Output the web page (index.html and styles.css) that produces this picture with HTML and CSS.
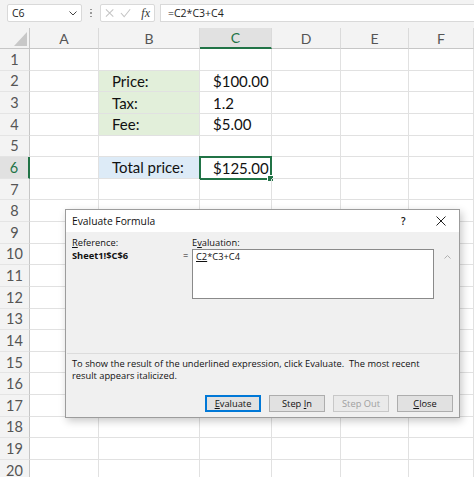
FILE: index.html
```html
<!DOCTYPE html>
<html>
<head>
<meta charset="utf-8">
<link rel="stylesheet" href="styles.css">
</head>
<body>
<div class="app">
  <div class="toolbar">
    <div class="namebox">
      <span class="nb-text">C6</span>
      <svg class="chev" width="8" height="5" viewBox="0 0 8 5"><path d="M0.5 0.5 L4 4 L7.5 0.5" fill="none" stroke="#444" stroke-width="1"/></svg>
    </div>
    <div class="vdots"><span></span><span></span><span></span></div>
    <div class="fxbox">
      <svg width="10" height="10" viewBox="0 0 10 10"><path d="M1 1 L9 9 M9 1 L1 9" stroke="#c4c4c4" stroke-width="1.1"/></svg>
      <svg width="12" height="10" viewBox="0 0 12 10"><path d="M1 5 L4.5 9 L11 1" fill="none" stroke="#c4c4c4" stroke-width="1.1"/></svg>
      <span class="fx">fx</span>
    </div>
    <div class="formula">=C2*C3+C4</div>
  </div>

  <div class="sheet">
    <div class="hd corner"><svg width="13" height="14" viewBox="0 0 13 14"><polygon points="13,0 13,14 0,14" fill="#c8c8c8"/></svg></div>
    <div class="hd col">A</div>
    <div class="hd col">B</div>
    <div class="hd col sel">C</div>
    <div class="hd col">D</div>
    <div class="hd col">E</div>
    <div class="hd col">F</div>

    <div class="hd rown">1</div><div class="c"></div><div class="c"></div><div class="c"></div><div class="c"></div><div class="c"></div><div class="c"></div>
    <div class="hd rown">2</div><div class="c"></div><div class="c green">Price:</div><div class="c">$100.00</div><div class="c"></div><div class="c"></div><div class="c"></div>
    <div class="hd rown">3</div><div class="c"></div><div class="c green">Tax:</div><div class="c">1.2</div><div class="c"></div><div class="c"></div><div class="c"></div>
    <div class="hd rown">4</div><div class="c"></div><div class="c green">Fee:</div><div class="c">$5.00</div><div class="c"></div><div class="c"></div><div class="c"></div>
    <div class="hd rown">5</div><div class="c"></div><div class="c"></div><div class="c"></div><div class="c"></div><div class="c"></div><div class="c"></div>
    <div class="hd rown rsel">6</div><div class="c"></div><div class="c blue">Total price:</div><div class="c active">$125.00<span class="handle"></span></div><div class="c"></div><div class="c"></div><div class="c"></div>
    <div class="hd rown">7</div><div class="c"></div><div class="c"></div><div class="c"></div><div class="c"></div><div class="c"></div><div class="c"></div>
    <div class="hd rown">8</div><div class="c"></div><div class="c"></div><div class="c"></div><div class="c"></div><div class="c"></div><div class="c"></div>
    <div class="hd rown">9</div><div class="c"></div><div class="c"></div><div class="c"></div><div class="c"></div><div class="c"></div><div class="c"></div>
    <div class="hd rown">10</div><div class="c"></div><div class="c"></div><div class="c"></div><div class="c"></div><div class="c"></div><div class="c"></div>
    <div class="hd rown">11</div><div class="c"></div><div class="c"></div><div class="c"></div><div class="c"></div><div class="c"></div><div class="c"></div>
    <div class="hd rown">12</div><div class="c"></div><div class="c"></div><div class="c"></div><div class="c"></div><div class="c"></div><div class="c"></div>
    <div class="hd rown">13</div><div class="c"></div><div class="c"></div><div class="c"></div><div class="c"></div><div class="c"></div><div class="c"></div>
    <div class="hd rown">14</div><div class="c"></div><div class="c"></div><div class="c"></div><div class="c"></div><div class="c"></div><div class="c"></div>
    <div class="hd rown">15</div><div class="c"></div><div class="c"></div><div class="c"></div><div class="c"></div><div class="c"></div><div class="c"></div>
    <div class="hd rown">16</div><div class="c"></div><div class="c"></div><div class="c"></div><div class="c"></div><div class="c"></div><div class="c"></div>
    <div class="hd rown">17</div><div class="c"></div><div class="c"></div><div class="c"></div><div class="c"></div><div class="c"></div><div class="c"></div>
    <div class="hd rown">18</div><div class="c"></div><div class="c"></div><div class="c"></div><div class="c"></div><div class="c"></div><div class="c"></div>
    <div class="hd rown">19</div><div class="c"></div><div class="c"></div><div class="c"></div><div class="c"></div><div class="c"></div><div class="c"></div>
    <div class="hd rown">20</div><div class="c"></div><div class="c"></div><div class="c"></div><div class="c"></div><div class="c"></div><div class="c"></div>
  </div>

  <div class="dialog">
    <div class="dlg-title">
      <span class="dlg-name">Evaluate Formula</span>
      <span class="dlg-help">?</span>
      <svg class="dlg-close" width="10" height="10" viewBox="0 0 10 10"><path d="M0.5 0.5 L9.5 9.5 M9.5 0.5 L0.5 9.5" stroke="#222" stroke-width="1"/></svg>
    </div>
    <div class="dlg-body">
      <div class="eval-grid">
        <div class="lbl"><u>R</u>eference:</div>
        <div></div>
        <div class="lbl">E<u>v</u>aluation:</div>
        <div></div>
        <div class="ref">Sheet1!$C$6</div>
        <div class="eq">=</div>
        <div class="evalbox"><u>C2</u>*C3+C4</div>
        <div class="scroll"><svg width="7" height="4" viewBox="0 0 7 4"><path d="M0.5 3.5 L3.5 0.5 L6.5 3.5" fill="none" stroke="#b0b0b0" stroke-width="1"/></svg></div>
      </div>
      <div class="sep"></div>
      <p class="hint">To show the result of the underlined expression, click Evaluate.&nbsp; The most recent<br>result appears italicized.</p>
      <div class="buttons">
        <button class="btn default"><u>E</u>valuate</button>
        <button class="btn">Step <u>I</u>n</button>
        <button class="btn disabled">Step Out</button>
        <button class="btn"><u>C</u>lose</button>
      </div>
    </div>
  </div>
</div>
</body>
</html>
```
FILE: styles.css
```css
html, body {
  margin: 0;
  padding: 0;
  background: #ffffff;
}
.app {
  position: relative;
  width: 474px;
  height: 477px;
  overflow: hidden;
  font-family: "Open Sans", "Noto Sans", sans-serif;
}
.toolbar {
  height: 28px;
  background: #f3f3f3;
  display: flex;
  align-items: flex-start;
  padding: 4px 0 0 7px;
  box-sizing: border-box;
}
.namebox {
  width: 75px;
  height: 18px;
  box-sizing: border-box;
  background: #fff;
  border: 1px solid #d9d9d9;
  border-radius: 2px;
  display: flex;
  align-items: center;
  justify-content: space-between;
  padding: 0 4px 0 4px;
  font-size: 10.5px;
  color: #222;
}
.chev { margin-top: 1px; }
.vdots {
  width: 18px;
  height: 18px;
  display: flex;
  flex-direction: column;
  align-items: center;
  justify-content: center;
  gap: 2px;
}
.vdots span {
  width: 1.5px;
  height: 1.5px;
  background: #8a8a8a;
  border-radius: 50%;
}
.fxbox {
  width: 55px;
  height: 18px;
  box-sizing: border-box;
  background: #fff;
  border: 1px solid #d9d9d9;
  border-radius: 2px;
  display: flex;
  align-items: center;
  padding: 0 4px 0 4px;
  gap: 6px;
}
.fx {
  font-family: "Liberation Serif", "DejaVu Serif", serif;
  font-style: italic;
  font-size: 12px;
  color: #333;
  margin-left: 4px;
}
.formula {
  flex: 1;
  height: 18px;
  margin-left: 5px;
  box-sizing: border-box;
  background: #fff;
  border: 1px solid #d9d9d9;
  border-right: none;
  padding-left: 7px;
  font-size: 10.5px;
  line-height: 16px;
  color: #222;
}

.sheet {
  display: grid;
  grid-template-columns: 30px 69px 101px 72px 69px 68px 65px;
  grid-template-rows: 21px;
  grid-auto-rows: 21.63px;
  font-family: "Lato", "Open Sans", sans-serif;
}
.hd {
  background: #f3f3f3;
  color: #555;
  font-size: 14px;
  display: flex;
  align-items: center;
  justify-content: center;
  box-sizing: border-box;
}
.col {
  border-right: 1px solid #dadada;
  border-bottom: 1px solid #c6c6c6;
}
.corner {
  border-right: 1px solid #c6c6c6;
  border-bottom: 1px solid #c6c6c6;
  justify-content: flex-end;
  align-items: flex-end;
  padding: 0 2px 2px 0;
}
.col.sel {
  background: #e1e1e1;
  color: #217346;
  border-bottom: 2px solid #217346;
}
.rown {
  border-right: 1px solid #c6c6c6;
  border-bottom: 1px solid #e4e4e4;
  font-size: 14.5px;
}
.rown.rsel {
  background: #e1e1e1;
  color: #217346;
  border-right: 2px solid #217346;
}
.c {
  position: relative;
  border-right: 1px solid #e1e1e1;
  border-bottom: 1px solid #e1e1e1;
  box-sizing: border-box;
  font-size: 15px;
  color: #111;
  padding-left: 13px;
  display: flex;
  align-items: center;
  white-space: nowrap;
}
.green { background: #e2efda; }
.blue { background: #ddebf7; }
.active {
  border: 2px solid #217346;
  margin: -1px 0 -1px -1px;
  padding-left: 12px;
}
.handle {
  position: absolute;
  right: -4px;
  bottom: -4px;
  width: 5px;
  height: 5px;
  background: #217346;
  border: 1px solid #fff;
}

.dialog {
  position: absolute;
  left: 65px;
  top: 209px;
  width: 395px;
  height: 209px;
  box-sizing: border-box;
  border: 1px solid #9c9c9c;
  background: #f0f0f0;
  box-shadow: 2px 3px 8px rgba(0,0,0,0.22);
  font-family: "Open Sans", "Noto Sans", sans-serif;
  color: #111;
  display: flex;
  flex-direction: column;
}
.dlg-title {
  height: 22px;
  background: #fff;
  display: flex;
  align-items: center;
  padding: 0 0 0 6px;
  font-size: 10.3px;
}
.dlg-name { flex: 1; }
.dlg-help {
  font-size: 10px;
  font-weight: 600;
  width: 10px;
  margin-right: 25px;
}
.dlg-close { margin-right: 13px; }
.dlg-body {
  flex: 1;
  padding: 5px 6px 0 6px;
  display: flex;
  flex-direction: column;
  font-size: 9.3px;
}
.eval-grid {
  display: grid;
  grid-template-columns: 111px 9px 242px 1fr;
  grid-template-rows: 12px 50px;
}
.lbl {
  line-height: 12px;
}
.ref {
  font-weight: 700;
  padding-top: 1px;
  line-height: 12px;
}
.eq {
  padding-top: 1px;
  line-height: 12px;
  text-align: left;
}
.evalbox {
  background: #fff;
  border: 1px solid #8a8a8a;
  box-sizing: border-box;
  padding: 1px 3px;
  line-height: 12px;
}
.scroll {
  margin-left: 8px;
  width: 10px;
  height: 50px;
  display: flex;
  justify-content: center;
  padding-top: 6px;
  box-sizing: border-box;
}
.sep {
  margin-top: 54px;
  margin-left: -5px;
  margin-right: -5px;
  height: 1px;
  background: #dcdcdc;
}
.hint {
  margin: 4px 0 0 0;
  line-height: 12px;
}
.buttons {
  margin-top: 13px;
  display: flex;
  justify-content: flex-end;
  gap: 8px;
}
.btn {
  width: 56px;
  height: 17px;
  padding: 0;
  background: #e1e1e1;
  border: 1px solid #adadad;
  font-family: "Open Sans", "Noto Sans", sans-serif;
  font-size: 9.3px;
  color: #111;
  line-height: 14px;
}
.btn.default {
  border: 1px solid #0078d7;
  box-shadow: inset 0 0 0 1px #0078d7;
}
.btn.disabled {
  color: #a0a0a0;
  background: #eaeaea;
  border-color: #c8c8c8;
}
```
